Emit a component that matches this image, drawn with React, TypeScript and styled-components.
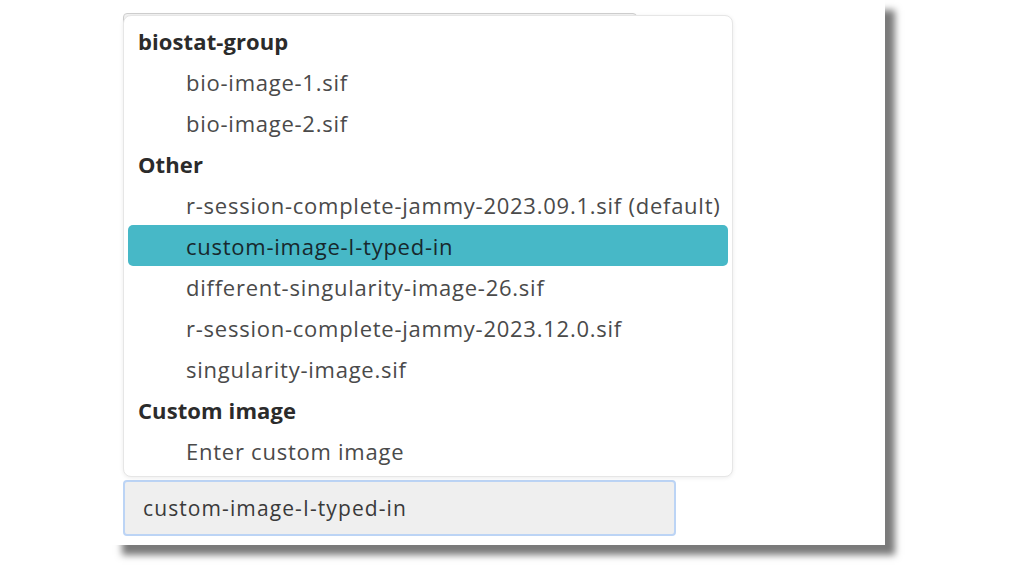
import styled, { createGlobalStyle } from "styled-components"

const GlobalStyle = createGlobalStyle`
    html, body {
        margin: 0;
        padding: 0;
        background: #ffffff;
    }
    body {
        font-family: "Open Sans", "Noto Sans", sans-serif;
    }
`

const Page = styled.div`
    width: 1024px;
    height: 576px;
    overflow: hidden;
    background: #ffffff;
`

const Card = styled.section`
    width: 773px;
    height: 545px;
    margin-left: 112px;
    padding: 13px 0 0 11px;
    box-sizing: border-box;
    background: #ffffff;
    box-shadow: 10px 10px 7px #7a7a7a;
`

const SelectWrap = styled.div`
    position: relative;
    height: 467px;
`

const Trigger = styled.div`
    width: 514px;
    height: 40px;
    box-sizing: border-box;
    border: 1px solid #cfcfcf;
    border-radius: 4px;
    background: #f4f4f4;
`

const Menu = styled.ul`
    position: absolute;
    top: 2px;
    left: 0;
    width: 610px;
    height: 462px;
    box-sizing: border-box;
    margin: 0;
    padding: 4px 0 5px;
    list-style: none;
    background: #ffffff;
    border: 1px solid #e6e6e6;
    border-radius: 8px;
    box-shadow: 0 1px 4px rgba(0, 0, 0, 0.08);
`

const GroupLabel = styled.li`
    height: 41px;
    display: flex;
    align-items: center;
    padding-left: 14px;
    font-size: 22px;
    font-weight: 700;
    color: #2b2b2b;
    letter-spacing: 0.1px;
`

const Option = styled.li<{ $active?: boolean }>`
    height: 41px;
    display: flex;
    align-items: center;
    margin: 0 4px;
    padding-left: 58px;
    border-radius: 5px;
    font-size: 22px;
    color: ${p => (p.$active ? "#17282d" : "#4a4a4a")};
    background: ${p => (p.$active ? "#47b8c7" : "transparent")};
    letter-spacing: 0.75px;
`

const Input = styled.div`
    width: 553px;
    height: 56px;
    box-sizing: border-box;
    display: flex;
    align-items: center;
    padding-left: 18px;
    background: #efefef;
    border: 2px solid #bcd4f5;
    border-radius: 4px;
    font-size: 21px;
    color: #3a3a3a;
    letter-spacing: 1.1px;
`

const groups = [
    { label: "biostat-group", items: ["bio-image-1.sif", "bio-image-2.sif"] },
    {
        label: "Other",
        items: [
            "r-session-complete-jammy-2023.09.1.sif (default)",
            "custom-image-I-typed-in",
            "different-singularity-image-26.sif",
            "r-session-complete-jammy-2023.12.0.sif",
            "singularity-image.sif",
        ],
    },
    { label: "Custom image", items: ["Enter custom image"] },
]

const selected = "custom-image-I-typed-in"

export default function App() {
    return (
        <Page>
            <GlobalStyle />
            <Card>
                <SelectWrap>
                    <Trigger />
                    <Menu>
                        {groups.map(g => (
                            <>
                                <GroupLabel key={g.label}>{g.label}</GroupLabel>
                                {g.items.map(item => (
                                    <Option key={item} $active={item === selected}>
                                        {item}
                                    </Option>
                                ))}
                            </>
                        ))}
                    </Menu>
                </SelectWrap>
                <Input>custom-image-I-typed-in</Input>
            </Card>
        </Page>
    )
}
